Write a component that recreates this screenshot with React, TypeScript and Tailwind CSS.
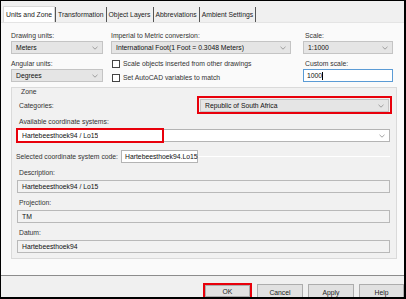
import React from "react";

const Chevron = () => (
  <svg width="6" height="4" viewBox="0 0 6 4" className="shrink-0">
    <polyline points="0.5,0.8 3,3.2 5.5,0.8" fill="none" stroke="#8a8a8a" strokeWidth="0.8" />
  </svg>
);

function Select({ value, white, className = "" }: { value: string; white?: boolean; className?: string }) {
  return (
    <div
      className={`h-[13px] flex items-center justify-between pl-[4px] pr-[4px] border ${
        white ? "bg-white border-[#b4b4b4]" : "bg-[#e5e5e5] border-[#c4c4c4]"
      } text-[#111] ${className}`}
    >
      <span className="truncate">{value}</span>
      <Chevron />
    </div>
  );
}

function Field({ value }: { value: string }) {
  return (
    <div className="h-[13px] flex items-center pl-[4px] border border-[#b9b9b9] bg-[#f2f2f2] text-[#111]">
      {value}
    </div>
  );
}

function Check({ label }: { label: string }) {
  return (
    <div className="flex items-center gap-[3px] h-[9px]">
      <div className="w-[8px] h-[8px] border border-[#444] bg-white" />
      <span>{label}</span>
    </div>
  );
}

const tabs = ["Units and Zone", "Transformation", "Object Layers", "Abbreviations", "Ambient Settings"];

export default function App() {
  return (
    <div className="w-[406px] h-[299px] overflow-hidden border-l border-t border-r-2 border-b-2 border-black bg-[#f0f0f0] flex flex-col font-['Liberation_Sans',Arial,sans-serif] text-[6.8px] leading-[9px] text-[#333]">
      {/* tabs */}
      <div className="h-[21px] flex items-end pl-[2px] shrink-0">
        {tabs.map((t, i) =>
          i === 0 ? (
            <div key={t} className="h-[16px] px-[2px] flex items-center bg-white border border-b-0 border-[#d9d9d9] text-[#222]">
              {t}
            </div>
          ) : (
            <div key={t} className="h-[15px] flex items-center px-[2px] border-l border-[#555] text-[#222]">
              {t}
            </div>
          )
        )}
        <div className="h-[15px] border-l border-[#555]" />
      </div>

      {/* panel */}
      <div className="flex-1 bg-[#fafafa] border-t border-[#e4e4e4] pl-[10px] pr-[7px] pt-[8px]">
        <div className="grid grid-cols-[92px_180px_94px] gap-x-[8px]">
          <div className="flex flex-col">
            <div className="h-[9px]">Drawing units:</div>
            <Select value="Meters" className="mt-[1px]" />
            <div className="h-[9px] mt-[5px]">Angular units:</div>
            <Select value="Degrees" className="mt-[1px]" />
          </div>
          <div className="flex flex-col">
            <div className="h-[9px]">Imperial to Metric conversion:</div>
            <Select value="International Foot(1 Foot = 0.3048 Meters)" className="mt-[1px]" />
            <div className="pl-[1px] mt-[5px] flex flex-col gap-[5px]">
              <Check label="Scale objects inserted from other drawings" />
              <Check label="Set AutoCAD variables to match" />
            </div>
          </div>
          <div className="flex flex-col ml-[4px]">
            <div className="h-[9px] pl-[2px]">Scale:</div>
            <Select value="1:1000" className="mt-[1px]" />
            <div className="h-[9px] mt-[5px] pl-[2px]">Custom scale:</div>
            <div className="h-[13px] mt-[1px] bg-white border border-[#5b9bd5] flex items-center pl-[3px] text-[#111]">
              1000<span className="w-px h-[8px] bg-black" />
            </div>
          </div>
        </div>

        {/* zone group */}
        <div className="mt-[5px] w-[386px] h-[172px] border border-[#dadada] bg-[#f1f1f1] pl-[5px] pr-[6px]">
          <div className="h-[8px] leading-[8px] pl-[4px] text-[#333]">Zone</div>
          <div className="flex items-center justify-between">
            <span className="pl-[2px]">Categories:</span>
            <div className="w-[195px] h-[18px] border-2 border-[#e8000b] p-[1px] -mr-[2px]">
              <Select value="Republic of South Africa" className="h-[12px]" />
            </div>
          </div>
          <div className="h-[9px] mt-[3px] pl-[2px]">Available coordinate systems:</div>
          <div className="relative mt-[3px]">
            <Select value="Hartebeesthoek94 / Lo15" white />
            <div className="absolute -left-[1px] -top-[1px] w-[148px] h-[15px] border-2 border-[#e8000b]" />
          </div>
          <div className="flex items-center mt-[8px] -ml-[1px]">
            <span className="pr-[3px]">Selected coordinate system code:</span>
            <div className="h-[13px] w-[77px] bg-white border border-[#b4b4b4] flex items-center pl-[3px] text-[#111]">
              Hartebeesthoek94.Lo15
            </div>
            <div className="flex-1 h-px bg-white" />
          </div>
          <div className="h-[9px] mt-[5px] pl-[2px]">Description:</div>
          <div className="mt-[3px]">
            <Field value="Hartebeesthoek94 / Lo15" />
          </div>
          <div className="h-[9px] mt-[5px] pl-[2px]">Projection:</div>
          <div className="mt-[3px]">
            <Field value="TM" />
          </div>
          <div className="h-[9px] mt-[5px] pl-[2px]">Datum:</div>
          <div className="mt-[3px]">
            <Field value="Hartebeesthoek94" />
          </div>
        </div>
      </div>

      {/* buttons */}
      <div className="h-[22px] shrink-0 border-t border-[#8c8c8c] flex items-start justify-end gap-[5px] pt-[7px] pr-0">
        <div className="w-[49px] h-[16px] border-2 border-[#e8000b] flex">
          <div className="flex-1 bg-[#e1e1e1] border border-[#adadad] flex items-center justify-center text-[#222]">OK</div>
        </div>
        <div className="w-[46px] h-[16px] mt-[1px] bg-[#e1e1e1] border border-[#adadad] flex items-center justify-center text-[#222]">Cancel</div>
        <div className="w-[46px] h-[16px] mt-[1px] bg-[#e1e1e1] border border-[#adadad] flex items-center justify-center text-[#222]">Apply</div>
        <div className="w-[45px] h-[16px] mt-[1px] bg-[#e1e1e1] border border-[#adadad] flex items-center justify-center text-[#222]">Help</div>
      </div>
    </div>
  );
}
